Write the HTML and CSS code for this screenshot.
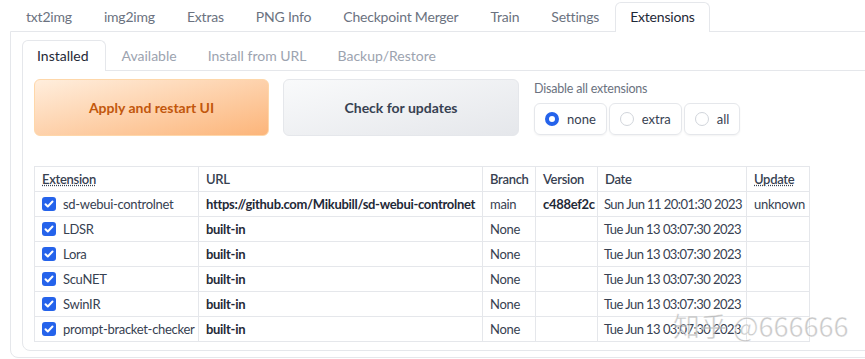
FILE: index.html
```html
<!DOCTYPE html>
<html lang="en">
<head>
  <meta charset="UTF-8">
  <title>Extensions</title>
  <link rel="stylesheet" href="styles.css">
</head>
<body>
  <div class="tabs">
    <span class="tab">txt2img</span>
    <span class="tab">img2img</span>
    <span class="tab">Extras</span>
    <span class="tab">PNG Info</span>
    <span class="tab">Checkpoint Merger</span>
    <span class="tab">Train</span>
    <span class="tab">Settings</span>
    <span class="tab selected">Extensions</span>
  </div>
  <div class="panel">
    <div class="subtabs">
      <span class="subtab selected">Installed</span>
      <span class="subtab">Available</span>
      <span class="subtab">Install from URL</span>
      <span class="subtab">Backup/Restore</span>
    </div>
    <div class="subpanel">
      <div class="actions">
        <button class="btn btn-primary">Apply and restart UI</button>
        <button class="btn btn-secondary">Check for updates</button>
        <div class="disable-group">
          <div class="disable-label">Disable all extensions</div>
          <div class="radios">
            <label class="radio"><span class="dot checked"></span>none</label>
            <label class="radio"><span class="dot"></span>extra</label>
            <label class="radio"><span class="dot"></span>all</label>
          </div>
        </div>
      </div>
      <table class="ext-table">
        <colgroup>
          <col style="width:164px"><col style="width:284px"><col style="width:53px">
          <col style="width:62px"><col style="width:149px"><col style="width:63px">
        </colgroup>
        <thead>
          <tr>
            <th><abbr>Extension</abbr></th>
            <th>URL</th>
            <th>Branch</th>
            <th>Version</th>
            <th>Date</th>
            <th><abbr>Update</abbr></th>
          </tr>
        </thead>
        <tbody>
          <tr>
            <td><span class="check"></span>sd-webui-controlnet</td>
            <td class="url">https://github.com/Mikubill/sd-webui-controlnet</td>
            <td>main</td>
            <td class="url">c488ef2c</td>
            <td class="date">Sun Jun 11 20:01:30 2023</td>
            <td>unknown</td>
          </tr>
          <tr>
            <td><span class="check"></span>LDSR</td>
            <td class="url">built-in</td>
            <td>None</td><td></td>
            <td class="date">Tue Jun 13 03:07:30 2023</td><td></td>
          </tr>
          <tr>
            <td><span class="check"></span>Lora</td>
            <td class="url">built-in</td>
            <td>None</td><td></td>
            <td class="date">Tue Jun 13 03:07:30 2023</td><td></td>
          </tr>
          <tr>
            <td><span class="check"></span>ScuNET</td>
            <td class="url">built-in</td>
            <td>None</td><td></td>
            <td class="date">Tue Jun 13 03:07:30 2023</td><td></td>
          </tr>
          <tr>
            <td><span class="check"></span>SwinIR</td>
            <td class="url">built-in</td>
            <td>None</td><td></td>
            <td class="date">Tue Jun 13 03:07:30 2023</td><td></td>
          </tr>
          <tr>
            <td><span class="check"></span>prompt-bracket-checker</td>
            <td class="url">built-in</td>
            <td>None</td><td></td>
            <td class="date">Tue Jun 13 03:07:30 2023</td><td></td>
          </tr>
        </tbody>
      </table>
    </div>
  </div>
  <div class="watermark">知乎 @666666</div>
</body>
</html>
```

FILE: styles.css
```css
body {
  margin: 0;
  font-family: 'Lato', 'Liberation Sans', sans-serif;
  color: #374151;
  background: #fff;
  overflow: hidden;
  position: relative;
  height: 359px;
}
.tabs {
  display: flex;
  padding-left: 10px;
  height: 31px;
}
.tab {
  padding: 0 15px;
  font-size: 14px;
  letter-spacing: -0.2px;
  line-height: 31px;
  color: #6b7280;
  border: 1px solid transparent;
  border-bottom: none;
}
.tab.selected {
  color: #1f2937;
  background: #fff;
  border-color: #e5e7eb;
  border-radius: 6px 6px 0 0;
  margin-top: 2px;
  line-height: 28px;
  position: relative;
  z-index: 1;
  margin-bottom: -1px;
  height: 29px;
  padding: 0 14px;
}
.panel {
  margin-left: 10px;
  width: 880px;
  border: 1px solid #e5e7eb;
  border-radius: 0 0 0 8px;
  padding: 8px 0 6px 11px;
  box-sizing: border-box;
}
.subtabs {
  display: flex;
  height: 30px;
}
.subtab {
  padding: 0 14px 0 15px;
  font-size: 14px;
  line-height: 30px;
  color: #9ca3af;
  border: 1px solid transparent;
  border-bottom: none;
}
.subtab.selected {
  color: #1f2937;
  border-color: #e5e7eb;
  border-radius: 6px 6px 0 0;
  background: #fff;
  position: relative;
  z-index: 1;
  margin-bottom: -1px;
  height: 30px;
  padding: 0 16px 0 14px;
}
.subpanel {
  border: 1px solid #e5e7eb;
  border-radius: 0 0 0 8px;
  padding: 8px 0 8px 11px;
}
.actions {
  display: flex;
  align-items: flex-start;
  height: 57px;
}
.btn {
  height: 57px;
  border-radius: 6px;
  font-family: inherit;
  font-size: 14px;
  font-weight: 700;
  cursor: pointer;
}
.btn-primary {
  width: 235px;
  border: 1px solid #fed7aa;
  background: linear-gradient(to bottom right, #ffeedd, #fcb57a);
  color: #c2570c;
}
.btn-secondary {
  width: 236px;
  margin-left: 14px;
  border: 1px solid #e5e7eb;
  background: linear-gradient(to bottom right, #f9fafb, #e5e7eb);
  color: #374151;
}
.disable-group {
  margin-left: 15px;
  margin-top: 2px;
}
.disable-label {
  font-size: 12.5px;
  letter-spacing: -0.2px;
  color: #6b7280;
  margin-bottom: 7px;
}
.radios {
  display: flex;
  gap: 2px;
}
.radio {
  display: flex;
  align-items: center;
  height: 30px;
  padding: 0 10px 0 10px;
  border: 1px solid #e5e7eb;
  border-radius: 6px;
  box-shadow: 0 1px 2px rgba(0, 0, 0, 0.05);
  font-size: 13px;
  color: #374151;
}
.dot {
  width: 12px;
  height: 12px;
  border: 1px solid #d1d5db;
  border-radius: 50%;
  margin-right: 8px;
  background: #fff;
}
.dot.checked {
  border: 4px solid #2563eb;
  width: 6px;
  height: 6px;
}
.ext-table {
  margin-top: 30px;
  border-collapse: collapse;
  table-layout: fixed;
  width: 775px;
  font-size: 13px;
  letter-spacing: -0.3px;
}
.ext-table th,
.ext-table td {
  border: 1px solid #e5e7eb;
  height: 24px;
  padding: 0 7px;
  text-align: left;
  white-space: nowrap;
  overflow: hidden;
}
.ext-table td.date {
  padding: 0 6px;
  letter-spacing: -0.55px;
}
.ext-table th {
  font-weight: 600;
  color: #374151;
}
.ext-table abbr {
  text-decoration: underline dotted;
}
.ext-table td.url {
  font-weight: 700;
  color: #1f2937;
}
.check {
  display: inline-block;
  vertical-align: -2px;
  width: 14px;
  height: 14px;
  margin-right: 7px;
  border-radius: 3px;
  background: #2563eb url("data:image/svg+xml;utf8,<svg xmlns='http://www.w3.org/2000/svg' viewBox='0 0 14 14'><path d='M3.5 7.2l2.3 2.3 4.7-5' fill='none' stroke='white' stroke-width='2' stroke-linecap='round' stroke-linejoin='round'/></svg>") center/14px no-repeat;
}
.watermark {
  position: absolute;
  left: 673px;
  top: 306px;
  font-family: 'Noto Sans CJK SC', sans-serif;
  font-size: 27px;
  color: rgba(150, 150, 150, 0.5);
  -webkit-text-stroke: 0.5px rgba(255, 255, 255, 0.8);
  pointer-events: none;
}
```
